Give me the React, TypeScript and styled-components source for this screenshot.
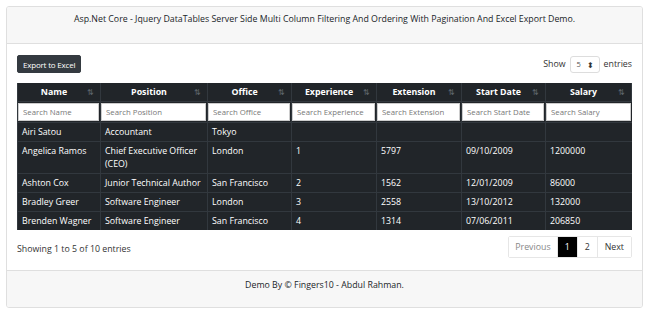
import React from 'react'
import styled, { createGlobalStyle } from 'styled-components'

const GlobalStyle = createGlobalStyle`
  html, body {
    margin: 0;
    padding: 0;
    background: #fff;
  }
  body {
    font-family: "Open Sans", "Noto Sans", sans-serif;
    font-size: 8.8px;
    color: #212529;
  }
`

const Page = styled.div`
  padding: 6px 7px 7px 6px;
`

const Card = styled.div`
  border: 1px solid #dfdfdf;
  border-radius: 3px;
  overflow: hidden;
`

const CardHeader = styled.div`
  background: #f7f7f7;
  border-bottom: 1px solid #dfdfdf;
  height: 37px;
  display: flex;
  align-items: center;
  justify-content: center;
  padding-bottom: 12px;
  box-sizing: border-box;
  font-size: 8.8px;
`

const CardBody = styled.div`
  padding: 11px 10px 12px 10px;
`

const CardFooter = styled.div`
  background: #f7f7f7;
  border-top: 1px solid #dfdfdf;
  height: 37px;
  display: flex;
  align-items: center;
  justify-content: center;
  padding-bottom: 8px;
  box-sizing: border-box;
  font-size: 8.8px;
`

const TopBar = styled.div`
  display: flex;
  justify-content: space-between;
  align-items: center;
  margin-bottom: 10px;
`

const ExportButton = styled.button`
  background: #343a40;
  color: #fff;
  border: 1px solid #343a40;
  border-radius: 2px;
  font-family: inherit;
  font-size: 8px;
  height: 18px;
  padding: 0 5px;
  letter-spacing: -0.2px;
`

const Length = styled.label`
  display: flex;
  align-items: center;
  gap: 4px;
  font-size: 8.8px;
  color: #333;
`

const SelectBox = styled.div`
  width: 30px;
  height: 17px;
  box-sizing: border-box;
  border: 1px solid #ddd;
  border-radius: 3px;
  display: flex;
  align-items: center;
  justify-content: space-between;
  padding: 0 5px 0 6px;
  font-size: 7.5px;
  color: #555;
`

const SelectArrows = styled.span`
  font-size: 8px;
  color: #333;
`

const Table = styled.table`
  width: 100%;
  border-collapse: collapse;
  background: #212529;
  color: #fff;
  table-layout: fixed;
`

const HeadCell = styled.th`
  position: relative;
  height: 18px;
  padding: 0 14px 0 4px;
  font-weight: 700;
  font-size: 8.8px;
  text-align: center;
  border: 1px solid #32383e;
  border-top: none;
`

const SortIcon = styled.span`
  position: absolute;
  right: 6px;
  top: 4px;
  font-size: 8px;
  line-height: 10px;
  color: #5f666d;
  font-weight: 400;
`

const SearchCell = styled.th`
  padding: 0 1px 1px 0;
  height: 19px;
  border-left: 1px solid #32383e;
`

const SearchInput = styled.input`
  width: 100%;
  height: 18px;
  box-sizing: border-box;
  border: 1px solid #ccc;
  background: #fff;
  font-family: inherit;
  font-size: 7.8px;
  padding: 0 4px;
  &::placeholder {
    color: #777;
  }
`

const Cell = styled.td`
  padding: 3px 4px 2px 4px;
  vertical-align: top;
  font-size: 8.8px;
  line-height: 13px;
  border-top: 1px solid #32383e;
  border-left: 1px solid #32383e;
`

const BottomBar = styled.div`
  display: flex;
  justify-content: space-between;
  align-items: center;
  margin-top: 6px;
`

const Info = styled.div`
  font-size: 8.8px;
  color: #333;
  padding-top: 3px;
`

const Pager = styled.div`
  display: flex;
  border: 1px solid #e6e6e6;
  border-radius: 2px;
  height: 22px;
  box-sizing: border-box;
`

const PageLink = styled.span<{ $active?: boolean; $muted?: boolean }>`
  display: flex;
  align-items: center;
  justify-content: center;
  padding: 0 ${p => (p.$muted ? 6 : 7)}px;
  font-size: 8.8px;
  background: ${p => (p.$active ? '#000' : '#fff')};
  color: ${p => (p.$active ? '#fff' : p.$muted ? '#888' : '#333')};
  border-left: 1px solid #e6e6e6;
  &:first-child {
    border-left: none;
  }
`

const columns = [
  { title: 'Name', width: 83 },
  { title: 'Position', width: 107 },
  { title: 'Office', width: 84 },
  { title: 'Experience', width: 85 },
  { title: 'Extension', width: 85 },
  { title: 'Start Date', width: 84 },
  { title: 'Salary', width: 86 },
]

const rows = [
  ['Airi Satou', 'Accountant', 'Tokyo', '', '', '', ''],
  ['Angelica Ramos', 'Chief Executive Officer (CEO)', 'London', '1', '5797', '09/10/2009', '1200000'],
  ['Ashton Cox', 'Junior Technical Author', 'San Francisco', '2', '1562', '12/01/2009', '86000'],
  ['Bradley Greer', 'Software Engineer', 'London', '3', '2558', '13/10/2012', '132000'],
  ['Brenden Wagner', 'Software Engineer', 'San Francisco', '4', '1314', '07/06/2011', '206850'],
]

export default function App() {
  return (
    <Page>
      <GlobalStyle />
      <Card>
        <CardHeader>
          Asp.Net Core - Jquery DataTables Server Side Multi Column Filtering And Ordering With Pagination And Excel Export Demo.
        </CardHeader>
        <CardBody>
          <TopBar>
            <ExportButton>Export to Excel</ExportButton>
            <Length>
              Show
              <SelectBox>
                <span>5</span>
                <SelectArrows>⬍</SelectArrows>
              </SelectBox>
              entries
            </Length>
          </TopBar>
          <Table>
            <colgroup>
              {columns.map(c => (
                <col key={c.title} style={{ width: c.width }} />
              ))}
            </colgroup>
            <thead>
              <tr>
                {columns.map(c => (
                  <HeadCell key={c.title}>
                    {c.title}
                    <SortIcon>⇅</SortIcon>
                  </HeadCell>
                ))}
              </tr>
              <tr>
                {columns.map(c => (
                  <SearchCell key={c.title}>
                    <SearchInput placeholder={`Search ${c.title}`} />
                  </SearchCell>
                ))}
              </tr>
            </thead>
            <tbody>
              {rows.map(r => (
                <tr key={r[0]}>
                  {r.map((v, i) => (
                    <Cell key={i}>{v}</Cell>
                  ))}
                </tr>
              ))}
            </tbody>
          </Table>
          <BottomBar>
            <Info>Showing 1 to 5 of 10 entries</Info>
            <Pager>
              <PageLink $muted>Previous</PageLink>
              <PageLink $active>1</PageLink>
              <PageLink>2</PageLink>
              <PageLink>Next</PageLink>
            </Pager>
          </BottomBar>
        </CardBody>
        <CardFooter>Demo By © Fingers10 - Abdul Rahman.</CardFooter>
      </Card>
    </Page>
  )
}
